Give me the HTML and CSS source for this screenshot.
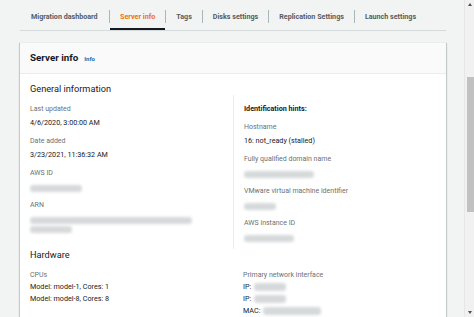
FILE: index.html
```html
<!DOCTYPE html>
<html lang="en">
<head>
  <meta charset="UTF-8">
  <title>Server info</title>
  <link rel="stylesheet" href="styles.css">
</head>
<body>
  <div class="page">
    <!-- Tabs -->
    <nav class="tabs">
      <a class="tab">Migration dashboard</a>
      <span class="tab-sep"></span>
      <a class="tab active">Server info</a>
      <span class="tab-sep"></span>
      <a class="tab">Tags</a>
      <span class="tab-sep"></span>
      <a class="tab">Disks settings</a>
      <span class="tab-sep"></span>
      <a class="tab">Replication Settings</a>
      <span class="tab-sep"></span>
      <a class="tab">Launch settings</a>
    </nav>

    <!-- Card -->
    <section class="card">
      <div class="card-header">
        <h2>Server info</h2>
        <a class="info-link">Info</a>
      </div>
      <div class="card-body">
        <h3 class="section-title">General information</h3>
        <div class="columns divided">
          <div class="col">
            <div class="field">
              <div class="label">Last updated</div>
              <div class="value">4/6/2020, 3:00:00 AM</div>
            </div>
            <div class="field">
              <div class="label">Date added</div>
              <div class="value">3/23/2021, 11:36:32 AM</div>
            </div>
            <div class="field">
              <div class="label">AWS ID</div>
              <div class="value"><span class="blur" style="width: 52px"></span></div>
            </div>
            <div class="field">
              <div class="label">ARN</div>
              <div class="value"><span class="blur" style="width: 162px"></span></div>
              <div class="value tight"><span class="blur" style="width: 42px"></span></div>
            </div>
          </div>
          <div class="col">
            <div class="col-title">Identification hints:</div>
            <div class="field">
              <div class="label">Hostname</div>
              <div class="value">16: not_ready (stalled)</div>
            </div>
            <div class="field">
              <div class="label">Fully qualified domain name</div>
              <div class="value"><span class="blur" style="width: 70px"></span></div>
            </div>
            <div class="field">
              <div class="label">VMware virtual machine identifier</div>
              <div class="value"><span class="blur" style="width: 32px"></span></div>
            </div>
            <div class="field">
              <div class="label">AWS instance ID</div>
              <div class="value"><span class="blur" style="width: 50px"></span></div>
            </div>
          </div>
        </div>

        <h3 class="section-title">Hardware</h3>
        <div class="columns">
          <div class="col">
            <div class="label">CPUs</div>
            <div class="value">Model: model-1, Cores: 1</div>
            <div class="value">Model: model-8, Cores: 8</div>
          </div>
          <div class="col">
            <div class="label">Primary network interface</div>
            <div class="value">IP: <span class="blur inline" style="width: 32px"></span></div>
            <div class="value">IP: <span class="blur inline" style="width: 32px"></span></div>
            <div class="value">MAC: <span class="blur inline" style="width: 58px"></span></div>
          </div>
        </div>
      </div>
    </section>
  </div>

  <!-- fake scrollbar -->
  <div class="scrollbar">
    <span class="arrow up"></span>
    <span class="thumb"></span>
    <span class="arrow down"></span>
  </div>
</body>
</html>
```

FILE: styles.css
```css
body {
  margin: 0;
  height: 317px;
  overflow: hidden;
  display: flex;
  background-color: #f2f3f3;
  color: #16191f;
  font-family: Roboto, "Open Sans", sans-serif;
}

.page {
  flex: 1;
  padding: 0 18px 0 20px;
  min-width: 0;
}

/* Tabs */
.tabs {
  display: flex;
  align-items: stretch;
  height: 30px;
  border-bottom: 1px solid #d5dbdb;
}
.tab {
  display: flex;
  align-items: center;
  padding: 2px 10px 0;
  font-size: 7.15px;
  font-weight: 700;
  color: #545b64;
  white-space: nowrap;
}
.tab:first-child {
  padding-left: 11px;
  padding-right: 11.5px;
}
.tab.active {
  color: #ec7211;
  box-shadow: inset 0 -2px 0 #16191f;
}
.tab-sep {
  width: 1px;
  height: 13px;
  align-self: center;
  margin-top: 3px;
  background-color: #aab7b8;
}

/* Card */
.card {
  margin-top: 11px;
  background-color: #fff;
  box-shadow: 0 1px 1px 0 rgba(0, 28, 36, 0.3), 1px 1px 1px 0 rgba(0, 28, 36, 0.15), -1px 1px 1px 0 rgba(0, 28, 36, 0.15);
  border-top: 1px solid #eaeded;
}
.card-header {
  display: flex;
  align-items: baseline;
  gap: 6px;
  height: 30px;
  padding: 0 10px;
  background-color: #fafafa;
  border-bottom: 1px solid #eaeded;
}
.card-header h2 {
  margin: 0;
  font-size: 9.8px;
  font-weight: 700;
  line-height: 30px;
}
.info-link {
  font-size: 6px;
  font-weight: 700;
  color: #0073bb;
}

.card-body {
  padding: 9px 10px 0;
}
.section-title {
  margin: 0;
  font-size: 9.2px;
  font-weight: 400;
  line-height: 12px;
}

.columns {
  display: grid;
  grid-template-columns: 1fr 1fr;
}
.col {
  padding-top: 8px;
}
.col + .col {
  padding-left: 10px;
}
.columns.divided .col + .col {
  border-left: 1px solid #eaeded;
}

.col-title {
  font-size: 7.2px;
  font-weight: 700;
  line-height: 12px;
  margin-bottom: 6px;
}
.field {
  margin-bottom: 6px;
}
.label {
  font-size: 7px;
  line-height: 12px;
  color: #6b7177;
}
.field .label {
  margin-bottom: 2px;
}
.value {
  display: flow-root;
  font-size: 7.2px;
  line-height: 12px;
  height: 12px;
  color: #16191f;
}
.value.tight {
  height: 9px;
}
.field .value.tight .blur {
  margin-top: 1px;
}

/* blurred values */
.blur {
  display: block;
  height: 7px;
  margin-top: 4px;
  border-radius: 3px;
  background-color: #d6d9da;
  filter: blur(1.8px);
}
.blur.inline {
  display: inline-block;
  vertical-align: middle;
  margin-top: 0;
  height: 8px;
  margin-left: 1px;
}

/* scrollbar */
.scrollbar {
  width: 9px;
  position: relative;
  background-color: #f1f1f1;
  border-left: 1px solid #e6e6e6;
}
.thumb {
  position: absolute;
  top: 77px;
  left: 2px;
  right: 0;
  height: 135px;
  background-color: #c1c1c1;
}
.arrow {
  position: absolute;
  left: 3px;
  width: 0;
  height: 0;
  border-left: 2px solid transparent;
  border-right: 2px solid transparent;
}
.arrow.up {
  top: 3px;
  border-bottom: 3px solid #505050;
}
.arrow.down {
  bottom: 3px;
  border-top: 3px solid #505050;
}
```
